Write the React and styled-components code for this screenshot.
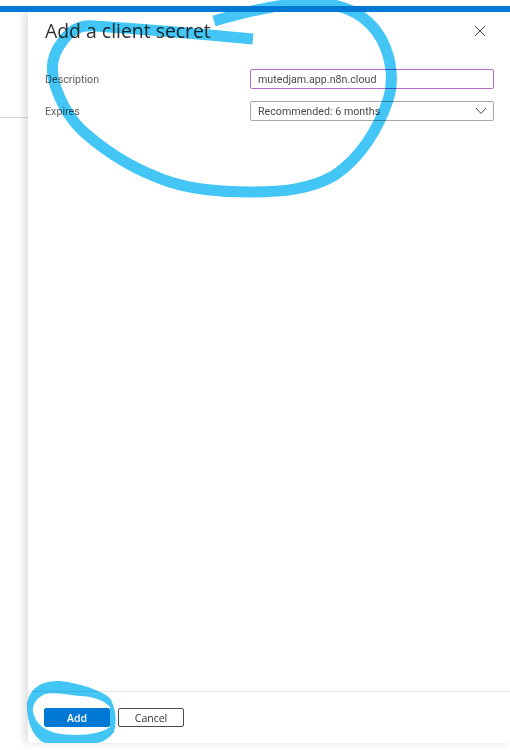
import React from "react";
import styled, { createGlobalStyle } from "styled-components";

const GlobalStyle = createGlobalStyle`
  html, body {
    margin: 0;
    padding: 0;
    background: #fff;
    font-family: "Open Sans", "Noto Sans", "Liberation Sans", sans-serif;
  }
`;

function App() {
  return (
    <Page>
      <GlobalStyle />
      <TopBar />
      <Main>
        <Behind>
          <BehindLine />
        </Behind>
        <Panel>
          <Header>
            <Title>Add a client secret</Title>
            <CloseBtn aria-label="Close">
              <svg width="12" height="12" viewBox="0 0 12 12">
                <path d="M1 1L11 11M11 1L1 11" stroke="#4a4a4a" strokeWidth="1" fill="none" />
              </svg>
            </CloseBtn>
          </Header>
          <Form>
            <Row>
              <Label>Description</Label>
              <TextInput readOnly value="mutedjam.app.n8n.cloud" />
            </Row>
            <Row>
              <Label>Expires</Label>
              <SelectBox>
                <span>Recommended: 6 months</span>
                <svg width="12" height="8" viewBox="0 0 12 8">
                  <path d="M1 1L6 6.5L11 1" stroke="#4a4a4a" strokeWidth="1" fill="none" />
                </svg>
              </SelectBox>
            </Row>
          </Form>
          <Footer>
            <PrimaryBtn>Add</PrimaryBtn>
            <SecondaryBtn>Cancel</SecondaryBtn>
          </Footer>
        </Panel>
      </Main>
      <Scribble viewBox="0 0 510 743" fill="none">
        <path
          d="M253 39 C200 34 140 29 95 26 C80 24 70 30 62 42 C52 55 50 70 55 85 C60 100 70 120 85 133 C110 155 140 172 170 182 C195 190 225 192 250 192 C280 192 310 190 335 175 C360 158 378 130 388 100 C394 82 392 60 382 40 C370 18 350 4 315 3 C285 2 245 12 214 21"
          stroke="#43c6f5"
          strokeWidth="11"
        />
        <path
          fillRule="evenodd"
          fill="#43c6f5"
          d="M60 681 C80 683 100 690 110 698 C116 708 117 722 114 732 C108 740 100 743 96 743 L45 743 C33 738 27 722 27 705 C28 692 38 680 60 681 Z M45 694 C36 698 32 705 33 712 C35 722 42 729 55 733 C75 737 100 735 110 727 L110 707 C104 700 92 696 80 696 C68 695 55 692 45 694 Z"
        />
      </Scribble>
    </Page>
  );
}

const Page = styled.div`
  position: relative;
  width: 510px;
  height: 750px;
  overflow: hidden;
  display: flex;
  flex-direction: column;
  padding: 6px 0 7px;
  box-sizing: border-box;
  background: #fff;
`;

const TopBar = styled.div`
  position: relative;
  z-index: 3;
  height: 6px;
  flex: none;
  background: #0078d4;
`;

const Main = styled.div`
  flex: 1;
  display: flex;
  min-height: 0;
`;

const Behind = styled.div`
  width: 28px;
  flex: none;
  padding-top: 105px;
  box-sizing: border-box;
`;

const BehindLine = styled.div`
  height: 1px;
  background: #d6d6d6;
`;

const Panel = styled.div`
  flex: 1;
  display: flex;
  flex-direction: column;
  background: #fff;
  box-shadow: -4px 0 8px rgba(0, 0, 0, 0.13);
`;

const Header = styled.div`
  display: flex;
  justify-content: space-between;
  align-items: center;
  height: 38px;
  padding: 0 24px 0 17px;
`;

const Title = styled.h1`
  margin: 0;
  font-size: 19.4px;
  font-weight: 400;
  color: #323130;
  line-height: 38px;
`;

const CloseBtn = styled.button`
  display: flex;
  padding: 0;
  border: none;
  background: none;
`;

const Form = styled.div`
  flex: 1;
  display: flex;
  flex-direction: column;
  gap: 12px;
  padding: 18px 16px 0 17px;
`;

const Row = styled.div`
  display: grid;
  grid-template-columns: 205px 244px;
  height: 20px;
  align-items: center;
`;

const Label = styled.label`
  padding-top: 2px;
  font-family: Roboto, "Open Sans", sans-serif;
  font-size: 10.7px;
  line-height: 20px;
  color: #605e5c;
`;

const TextInput = styled.input`
  height: 20px;
  box-sizing: border-box;
  padding: 0 7px;
  border: 1px solid #b36cc7;
  border-radius: 2px;
  outline: none;
  font-family: Roboto, "Open Sans", sans-serif;
  font-size: 10.7px;
  color: #4a4a4a;
`;

const SelectBox = styled.div`
  height: 20px;
  box-sizing: border-box;
  padding: 0 6px 0 7px;
  display: flex;
  justify-content: space-between;
  align-items: center;
  border: 1px solid #a6a6a6;
  border-radius: 2px;
  font-family: Roboto, "Open Sans", sans-serif;
  font-size: 10.7px;
  color: #4a4a4a;
`;

const Footer = styled.div`
  height: 52px;
  box-sizing: border-box;
  padding: 16px 16px 0 16px;
  display: flex;
  gap: 8px;
  border-top: 1px solid #e6e6e6;
`;

const PrimaryBtn = styled.button`
  width: 66px;
  height: 19px;
  padding: 0;
  border: 1px solid #0078d4;
  border-radius: 2px;
  background: #0078d4;
  color: #fff;
  font-family: inherit;
  font-size: 10.5px;
  font-weight: 600;
`;

const SecondaryBtn = styled(PrimaryBtn)`
  border-color: #4a4a4a;
  background: #fff;
  color: #323130;
  font-weight: 400;
`;

const Scribble = styled.svg`
  position: absolute;
  top: 0;
  left: 0;
  width: 510px;
  height: 743px;
  z-index: 2;
  mix-blend-mode: multiply;
  pointer-events: none;
`;

export default App;
